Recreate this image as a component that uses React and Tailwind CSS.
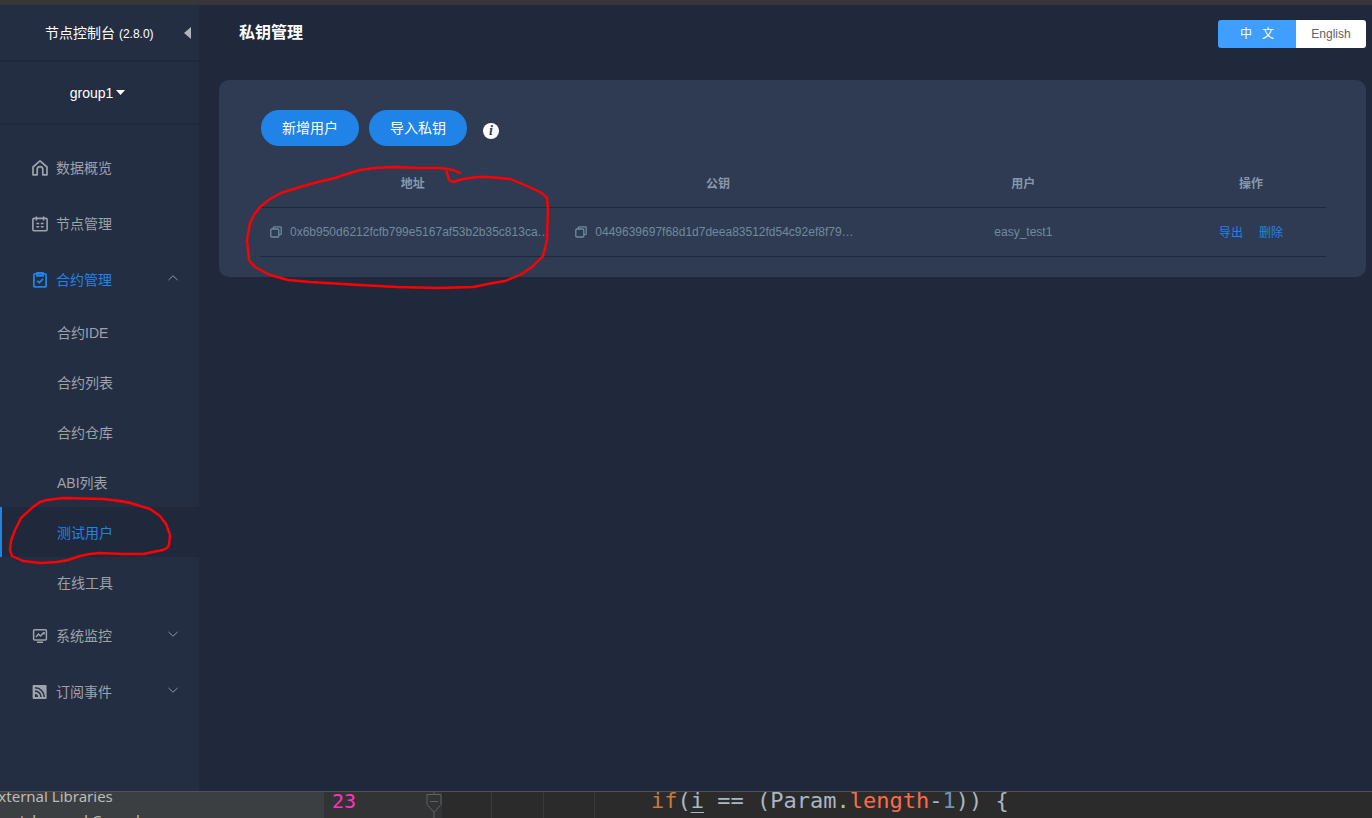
import { useState } from "react";
import clsx from "clsx";

/* ---------------- ICONS ---------------- */
const HomeIcon = () => (
  <svg width="16" height="16" viewBox="0 0 16 16" fill="none" stroke="currentColor" strokeWidth="1.7" strokeLinejoin="round">
    <path d="M1 7 8 .9 15 7v7.800h-4.200V9.400a2.800 2.800 0 0 0-5.600 0v5.400H1z" />
  </svg>
);

const CalendarIcon = () => (
  <svg width="16" height="16" viewBox="0 0 16 16" fill="none" stroke="currentColor" strokeWidth="1.6">
    <rect x=".9" y="2.4" width="14.2" height="12.400" rx="1" />
    <path d="M4.400.4v4M11.600.4v4" />
    <path d="M4.400 7.500h2.800M8.800 7.500h2.800M4.400 10.800h2.800M8.800 10.800h2.800" />
  </svg>
);

const ClipboardIcon = () => (
  <svg width="16" height="16" viewBox="0 0 16 16" fill="none" stroke="currentColor" strokeWidth="1.8">
    <rect x="1.9" y="1.9" width="12.2" height="13" rx="1" />
    <path d="M5 1h6v2.800H5z" />
    <path d="m5.200 8.800 2 2 3.800-4" />
  </svg>
);

const MonitorIcon = () => (
  <svg width="16" height="16" viewBox="0 0 16 16" fill="none" stroke="currentColor" strokeWidth="1.5">
    <rect x="1.6" y="1.7" width="12.800" height="10.300" rx="1" />
    <path d="m4 9 2.500-3 2 2L12 4.200M12 4v2.500M5 14.200h6" />
  </svg>
);

const RssIcon = () => (
  <svg width="16" height="16" viewBox="0 0 16 16">
    <rect x=".6" y="1" width="14" height="14" rx="1" fill="currentColor" />
    <g fill="none" stroke="#242e42" strokeWidth="1.5">
      <path d="M3 3.800A9.200 9.200 0 0 1 12.200 13M3 7a6 6 0 0 1 6 6" />
    </g>
    <path d="M3 10a3 3 0 0 1 3 3H3z" fill="#242e42" />
  </svg>
);

const Chevron = ({ up }) => (
  <svg width="10" height="6" viewBox="0 0 10 6" fill="none" stroke="#8f96a3" strokeWidth="1">
    <path d={up ? "M.5 5 5 .8 9.5 5" : "M.5 1 5 5.2 9.5 1"} />
  </svg>
);

const CopyIcon = () => (
  <svg width="12" height="12" viewBox="0 0 12 12" fill="none" stroke="currentColor" strokeWidth="1.3">
    <rect x=".8" y="3" width="8" height="8" rx="1" />
    <path d="M3.400 3V1.600a.8.8 0 0 1 .8-.8h6.200a.8.8 0 0 1 .8.8v6.200a.8.8 0 0 1-.8.8H8.800" />
  </svg>
);

/* ---------------- MENU ---------------- */
const menuItems = [
  { name: "数据概览", icon: HomeIcon },
  { name: "节点管理", icon: CalendarIcon },
  {
    name: "合约管理",
    icon: ClipboardIcon,
    open: true,
    children: ["合约IDE", "合约列表", "合约仓库", "ABI列表", "测试用户", "在线工具"],
  },
  { name: "系统监控", icon: MonitorIcon, children: [] },
  { name: "订阅事件", icon: RssIcon, children: [] },
];

const users = [
  {
    address: "0x6b950d6212fcfb799e5167af53b2b35c813ca…",
    publicKey: "0449639697f68d1d7deea83512fd54c92ef8f79…",
    name: "easy_test1",
  },
];

const Sidebar = () => {
  const [active, setActive] = useState("测试用户");

  return (
    <aside className="w-[199px] shrink-0 bg-[#242e42] text-sm text-[#9da2ab]">
      <div className="flex h-[57px] items-center border-b-2 border-[#20293c] pl-[45px] pr-2 pt-px text-white">
        <span className="whitespace-nowrap">
          节点控制台 <span className="text-xs">(2.8.0)</span>
        </span>
        <button aria-label="收起菜单" className="ml-auto text-[#b0b4bb]">
          <svg width="7" height="12" viewBox="0 0 7 12" fill="currentColor">
            <path d="M7 0v12L0 6z" />
          </svg>
        </button>
      </div>

      <div className="flex h-[63px] items-center justify-center border-b-2 border-[#20293c] pr-1">
        <button className="flex items-center gap-[3px] text-white">
          group1
          <svg width="9" height="5" viewBox="0 0 9 5" fill="currentColor">
            <path d="M0 0h9L4.500 5z" />
          </svg>
        </button>
      </div>

      <nav className="pt-[14px]">
        {menuItems.map((item) => (
          <div key={item.name}>
            <button
              className={clsx(
                "flex h-14 w-full items-center gap-2 pl-8 pr-[21px] pt-px",
                item.open && "text-[#1f83e7]"
              )}
            >
              <item.icon />
              <span>{item.name}</span>
              {item.children && (
                <span className="ml-auto pb-1">
                  <Chevron up={item.open} />
                </span>
              )}
            </button>
            {item.children?.map((child) => (
              <a
                key={child}
                href="#"
                onClick={() => setActive(child)}
                className={clsx(
                  "flex h-[50px] items-center border-l-2 pl-[55px] pt-[2px]",
                  child === active
                    ? "border-[#1f83e7] bg-[#20293c] text-[#1f83e7]"
                    : "border-transparent"
                )}
              >
                {child}
              </a>
            ))}
          </div>
        ))}
      </nav>
    </aside>
  );
};

const KeyCell = ({ value }) => (
  <td className="px-[10px]">
    <div className="flex items-center gap-2">
      <button aria-label="复制">
        <CopyIcon />
      </button>
      <span className="truncate">{value}</span>
    </div>
  </td>
);

const UserTable = () => (
  <table className="mt-4 w-full table-fixed border-collapse text-center text-xs text-[#6f8a9e]">
    <colgroup>
      <col />
      <col />
      <col />
      <col className="w-[150px]" />
    </colgroup>
    <thead>
      <tr className="h-[45px] border-b border-[#20293c] text-[#8798ad]">
        <th>地址</th>
        <th>公钥</th>
        <th>用户</th>
        <th>操作</th>
      </tr>
    </thead>
    <tbody>
      {users.map((user) => (
        <tr key={user.name} className="h-[49px] border-b border-[#20293c]">
          <KeyCell value={user.address} />
          <KeyCell value={user.publicKey} />
          <td>{user.name}</td>
          <td className="pt-[3px]">
            <div className="flex justify-center gap-4 text-[#1f83e7]">
              <button>导出</button>
              <button>删除</button>
            </div>
          </td>
        </tr>
      ))}
    </tbody>
  </table>
);

/* -------- EDITOR STRIP BELOW THE CONSOLE -------- */
const EditorStrip = () => (
  <footer className="flex h-[27px] shrink-0 overflow-hidden border-t border-[#505254] bg-[#2b2b2b]">
    <div className="w-[324px] shrink-0 overflow-hidden whitespace-nowrap bg-[#3c3f41] font-['Noto_Sans'] text-[15px] leading-6 text-[#bbbbbb]">
      <p className="-ml-[10px] -mt-2">External Libraries</p>
      <p className="-ml-[10px]">Scratches and Consoles</p>
    </div>
    <div className="flex w-[118px] shrink-0 justify-between bg-[#313335] pl-2 font-['DejaVu_Sans_Mono'] text-xl leading-[18px] text-[#ff33b8]">
      23
      <svg width="16" height="26" viewBox="0 0 16 26" fill="none" stroke="#606366">
        <path d="M8 0v2M1 2.500h14v10L8 20.500l-7-8zM4 9.500h8M8 20.500V26" />
      </svg>
    </div>
    <svg className="shrink-0" width="209" height="26" stroke="#393939">
      <path d="M49.500 0v26M101.500 0v26M152.500 0v26" />
    </svg>
    <code className="whitespace-pre font-['DejaVu_Sans_Mono'] text-[22px] leading-[18px] text-[#a9b7c6]">
      <span className="text-[#cc7832]">if</span>(
      <span className="underline decoration-1 underline-offset-4">i</span>
      {" == (Param."}
      <span className="text-[#ff6b47]">length</span>-<span className="text-[#6897bb]">1</span>
      {")) {"}
    </code>
  </footer>
);

/* -------- HAND-DRAWN MARKS -------- */
const Marks = () => (
  <svg
    className="pointer-events-none absolute left-0 top-0"
    width="600"
    height="600"
    fill="none"
    stroke="#ff0000"
    strokeWidth="2.4"
    strokeLinecap="round"
    strokeLinejoin="round"
  >
    <path d="M460 173 453 170 440 168 420 168 393 167 375 168 360 170 347 174 335 178 318 182 300 187 281 193 270 199 260 207 254 215 250 223 247 240 249 260 255 267 270 275 288 280 310 282 360 285 397 287 437 288 473 287 493 283 505 281 520 275 532 267 543 256 547 240 548 210 547 198 543 194 536 190 520 183 510 179 500 178 488 177 477 177 463 179 453 182 449 180 446 169" />
    <path d="M117 501 127 502 137 505 150 509 160 516 166 524 170 535 169 545 167 548 163 550 143 554 123 554 100 553 90 554 80 556 68 560 57 562 40 563 23 561 12 556 10 550 11 541 15 530 21 518 33 507 40 502 47 500 63 498 103 499 121 501 130 503" />
  </svg>
);

export default function App() {
  const [lang, setLang] = useState("zh");

  return (
    <div className="relative flex min-h-screen flex-col bg-[#20293c] font-['Liberation_Sans','Noto_Sans_CJK_SC',sans-serif]">
      <div className="h-[5px] bg-[#373739]" />
      <div className="flex flex-1">
        <Sidebar />

        <main className="min-w-0 flex-1 pl-5 pr-[6px]">
          <header className="flex h-[75px] items-start justify-between pl-5 pt-[15px]">
            <h1 className="pt-px font-bold text-white">私钥管理</h1>
            <div className="flex h-7 overflow-hidden rounded-[3px] text-xs">
              <button onClick={() => setLang("zh")} className="w-[78px] bg-[#409eff] text-white">
                中&nbsp;&nbsp;&nbsp;文
              </button>
              <button onClick={() => setLang("en")} className="w-[70px] bg-white text-[#606266]">
                English
              </button>
            </div>
          </header>

          <section lang={lang} className="rounded-[10px] bg-[#2f3b52] pb-5 pl-[41px] pr-10 pt-[30px]">
            <div className="flex items-center gap-[10px] pl-px text-sm text-white">
              <button className="h-9 w-[98px] rounded-full bg-[#1f83e7]">新增用户</button>
              <button className="h-9 w-[98px] rounded-full bg-[#1f83e7]">导入私钥</button>
              <button
                aria-label="说明"
                className="ml-[6px] mt-[6px] h-4 w-4 rounded-full bg-white font-['Liberation_Serif'] font-bold italic leading-4 text-[#2f3b52]"
              >
                i
              </button>
            </div>
            <UserTable />
          </section>
        </main>
      </div>

      <EditorStrip />
      <Marks />
    </div>
  );
}
